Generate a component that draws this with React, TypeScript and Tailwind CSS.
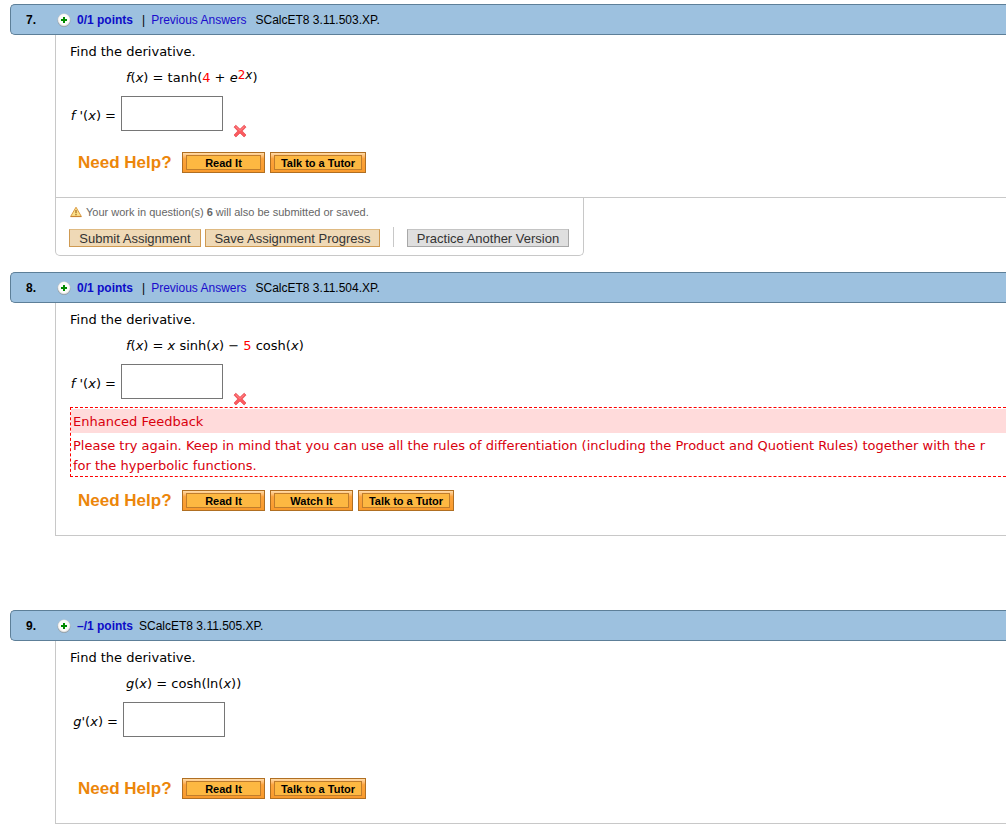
import React, { useState } from 'react';
import clsx from 'clsx';

interface QuestionProps {
  number: number;
  points: string;
  code: string;
  hasPrevious?: boolean;
  children: React.ReactNode;
}

const PlusIcon = () => (
  <svg width="14" height="14" viewBox="0 0 14 14">
    <circle cx="7" cy="7.4" r="6.5" fill="#8d9aa3" />
    <circle cx="7" cy="6.9" r="6.3" fill="#dededc" />
    <circle cx="7" cy="6.6" r="5.6" fill="#fbfbfa" />
    <path d="M6 4h2v2h2v2H8v2H6V8H4V6h2z" fill="#008a00" />
  </svg>
);

const WrongIcon = () => (
  <svg width="14" height="14" viewBox="0 0 14 14" role="img" aria-label="Incorrect">
    <path
      d="M2.8 1.2L7 5.2l4.2-4 1.8 1.9L9.2 7l3.8 4-1.9 2L7 9l-4.1 4L1 11l3.8-4L1 3.1z"
      fill="#fb5a5f"
      stroke="#e5484e"
      strokeWidth="0.7"
      strokeLinejoin="round"
    />
    <path d="M2.6 2.6L7 6.6l4.4-4" fill="none" stroke="#ff8a8c" strokeWidth="0.9" />
  </svg>
);

const WarningIcon = () => (
  <svg width="12" height="12" viewBox="0 0 12 12">
    <path d="M6 1.2L11.3 10.4H.7z" fill="#fbe08a" stroke="#d99a45" strokeWidth="1" strokeLinejoin="round" />
    <path d="M.6 10.6h10.8" stroke="#c8822f" strokeWidth="1" />
    <path d="M5.4 4h1.2v3.2H5.4zM5.4 8h1.2v1.2H5.4z" fill="#a0651a" />
  </svg>
);

const Question: React.FC<QuestionProps> = ({ number, points, code, hasPrevious, children }) => (
  <section>
    <header className="flex h-[31px] items-center rounded-l-[5px] border border-r-0 border-[#5d7f98] bg-[#9dc1df] font-['Liberation_Sans',Arial,sans-serif] text-[12px] text-black">
      <h2 className="w-[46px] pl-[15px] font-bold">{number}.</h2>
      <button type="button" aria-label="Expand question" className="mr-[6px]">
        <PlusIcon />
      </button>
      <a href="#points" className="font-bold text-[#0c0cc8]">{points}</a>
      {hasPrevious && (
        <>
          <span className="ml-[9px]">|</span>
          <a href="#previous" className="mr-[3px] ml-[6px] text-[#1a0ccc]">Previous Answers</a>
        </>
      )}
      <span className="ml-[6px]">{code}</span>
    </header>
    <div className="ml-[45px] border-b border-l border-[#c8c8c8] pt-[7px] pb-[24px] pl-[14px]">
      <p>Find the derivative.</p>
      {children}
    </div>
  </section>
);

const Formula: React.FC<{ children: React.ReactNode }> = ({ children }) => (
  <p className="mt-[6px] mb-[8px] h-[20px] pl-[56px]">{children}</p>
);

interface AnswerProps {
  id: string;
  label: React.ReactNode;
  wrong?: boolean;
  className?: string;
}

const Answer: React.FC<AnswerProps> = ({ id, label, wrong, className }) => {
  const [value, setValue] = useState('');

  return (
    <div className={clsx('flex h-[42px] items-start', className)}>
      <label htmlFor={id} className="mt-[10px] w-[51px] pr-[5px] text-right whitespace-nowrap">{label}</label>
      <input
        id={id}
        value={value}
        onChange={(e) => setValue(e.target.value)}
        className="h-[35px] w-[102px] border border-[#767676] bg-white px-2"
      />
      {wrong && (
        <span className="ml-[10px] self-end">
          <WrongIcon />
        </span>
      )}
    </div>
  );
};

const HelpButton: React.FC<{ wide?: boolean; children: string }> = ({ wide, children }) => (
  <button
    type="button"
    className={clsx(
      'h-[21px] border border-[#b06f22] bg-linear-to-b from-[#ffdca8] via-[#fca43c] via-30% to-[#f99a2c] px-[3px] py-[2px]',
      wide ? 'w-[96px]' : 'w-[83px]'
    )}
  >
    <span className="flex h-[15px] items-center justify-center whitespace-nowrap border border-[#c07d2c] bg-[#fdb842] text-[11px] font-bold text-black">
      {children}
    </span>
  </button>
);

const NeedHelp: React.FC<{ items: string[]; className?: string }> = ({ items, className }) => (
  <div className={clsx("flex items-center gap-[5px] pl-[8px] font-['Liberation_Sans',Arial,sans-serif]", className)}>
    <span className="w-[99px] whitespace-nowrap text-[17px] leading-[21px] font-bold text-[#ec860a]">Need Help?</span>
    {items.map((item) => (
      <HelpButton key={item} wide={item === 'Talk to a Tutor'}>{item}</HelpButton>
    ))}
  </div>
);

const SubmitBar = () => (
  <div className="ml-[45px] w-fit rounded-b-[5px] border border-t-0 border-[#c8c8c8] pt-[5px] pr-[14px] pb-[8px] pl-[13px] font-['Liberation_Sans',Arial,sans-serif]">
    <p className="flex h-[17px] items-center gap-[4px] pl-[1px] text-[11px] text-[#666]">
      <WarningIcon />
      <span>Your work in question(s) <b>6</b> will also be submitted or saved.</span>
    </p>
    <div className="mt-[7px] flex items-end text-[13px] leading-[18px] text-[#333]">
      <button type="button" className="h-[18px] w-[132px] border border-[#cf9a52] border-t-[#dfba82] bg-[#efd9b6]">
        Submit Assignment
      </button>
      <button type="button" className="ml-[4px] h-[18px] w-[175px] border border-[#cf9a52] border-t-[#dfba82] bg-[#efd9b6]">
        Save Assignment Progress
      </button>
      <span className="mx-[13px] h-[20px] w-px bg-[#c8c8c8]" />
      <button type="button" className="h-[18px] w-[162px] border border-[#a8a8a8] border-t-[#c4c4c4] bg-[#dfdfdf]">
        Practice Another Version
      </button>
    </div>
  </div>
);

const Feedback = () => (
  <div className="mt-px border border-r-0 border-dashed border-[#f00] text-[#d9000d]">
    <h3 className="mt-px h-[24px] bg-[#ffdbdb] pl-[2px] leading-[26px]">Enhanced Feedback</h3>
    <p className="h-[43px] pt-[3px] pl-[2px] leading-[20px] whitespace-nowrap">
      Please try again. Keep in mind that you can use all the rules of differentiation (including the Product and Quotient Rules) together with the r
      <br />
      for the hyperbolic functions.
    </p>
  </div>
);

export default function App() {
  return (
    <main className="overflow-hidden bg-white pt-[4px] pb-[4px] pl-[10px] font-['DejaVu_Sans',Verdana,sans-serif] text-[13px] leading-[20px] text-black">
      <Question number={7} points="0/1 points" code="SCalcET8 3.11.503.XP." hasPrevious>
        <Formula>
          <i>f</i>(<i>x</i>) = tanh(<span className="text-[#f00]">4</span> + <i>e</i>
          <sup className="-top-[3px] text-[12px]"><span className="text-[#f00]">2</span><i>x</i></sup>)
        </Formula>
        <Answer id="answer-7" label={<><i>f</i> '(<i>x</i>) =</>} wrong />
        <NeedHelp className="mt-[14px]" items={['Read It', 'Talk to a Tutor']} />
      </Question>
      <SubmitBar />

      <div className="mt-[16px]">
        <Question number={8} points="0/1 points" code="SCalcET8 3.11.504.XP." hasPrevious>
          <Formula>
            <i>f</i>(<i>x</i>) = <i>x</i> sinh(<i>x</i>) − <span className="text-[#f00]">5</span> cosh(<i>x</i>)
          </Formula>
          <Answer id="answer-8" label={<><i>f</i> '(<i>x</i>) =</>} wrong />
          <Feedback />
          <NeedHelp className="mt-[13px]" items={['Read It', 'Watch It', 'Talk to a Tutor']} />
        </Question>
      </div>

      <div className="mt-[74px]">
        <Question number={9} points="–/1 points" code="SCalcET8 3.11.505.XP.">
          <Formula>
            <i>g</i>(<i>x</i>) = cosh(ln(<i>x</i>))
          </Formula>
          <Answer id="answer-9" label={<><i>g</i>'(<i>x</i>) =</>} className="pl-[2px]" />
          <NeedHelp className="mt-[34px]" items={['Read It', 'Talk to a Tutor']} />
        </Question>
      </div>
    </main>
  );
}
